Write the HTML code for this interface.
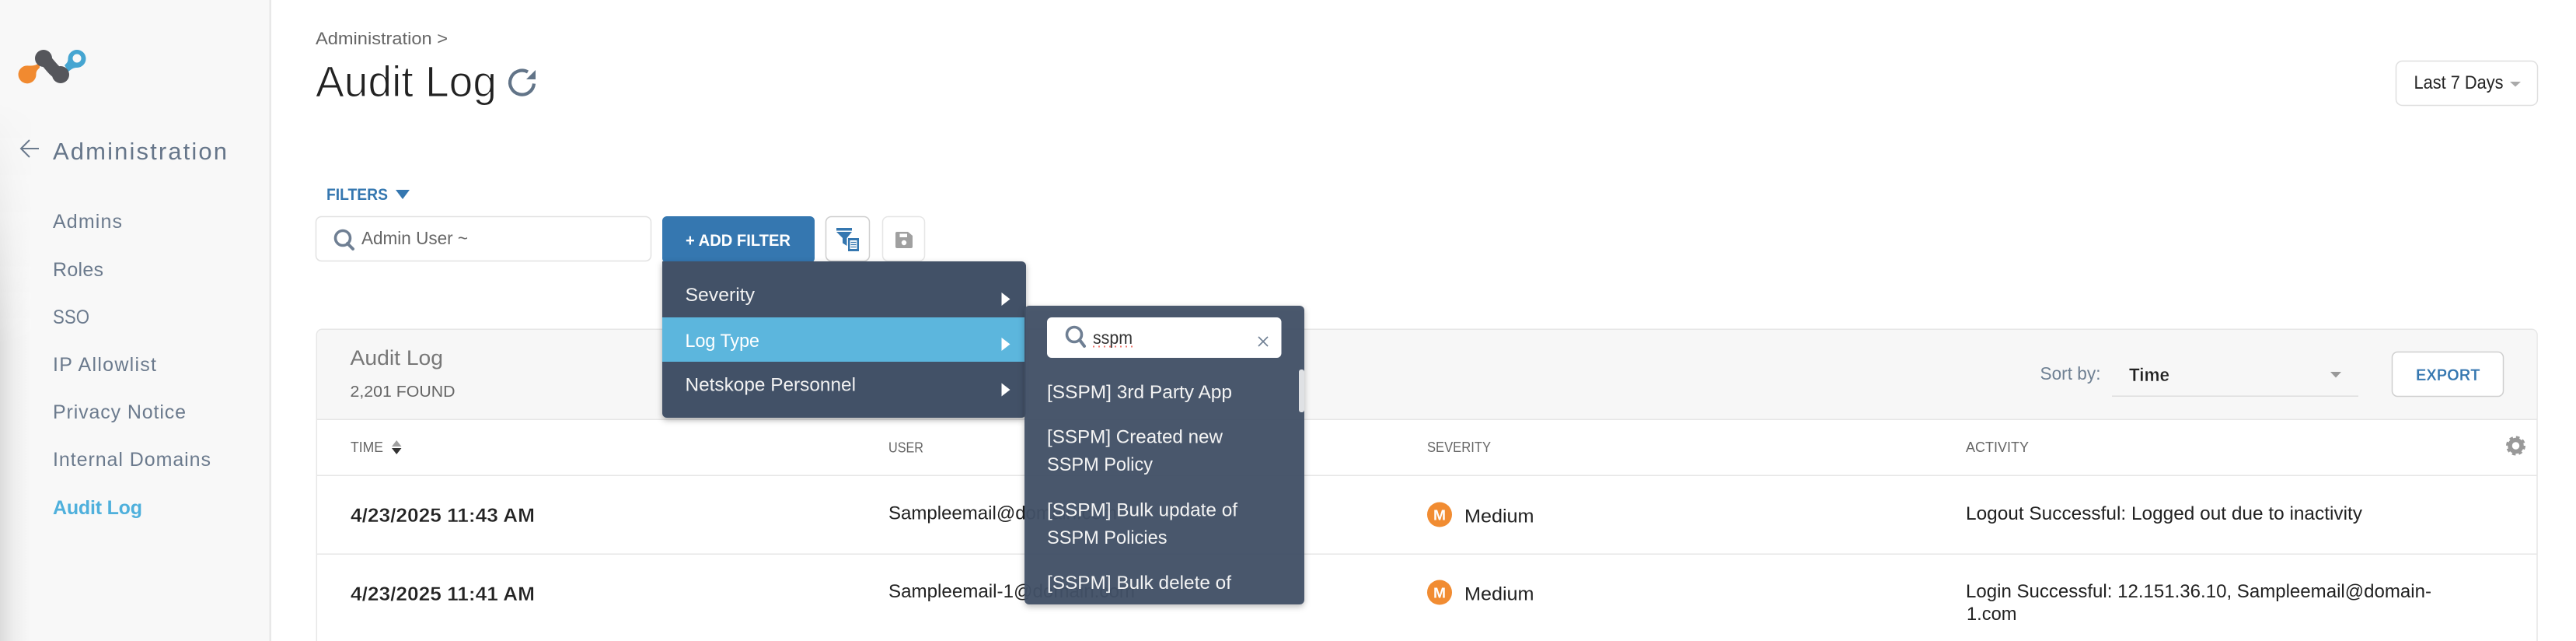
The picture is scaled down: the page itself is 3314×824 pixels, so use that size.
<!DOCTYPE html>
<html lang="en">
<head>
<meta charset="utf-8">
<title>Audit Log</title>
<style>
html,body{margin:0;padding:0;background:#fff;width:3314px;height:824px;overflow:hidden}
svg{display:block}
text{font-family:"Liberation Sans",sans-serif}
</style>
</head>
<body>
<svg xmlns="http://www.w3.org/2000/svg" width="3314" height="824" viewBox="0 0 3314 824">
<defs>
<linearGradient id="sh" x1="0" x2="1" y1="0" y2="0"><stop offset="0" stop-color="#dcdcdc"/><stop offset=".45" stop-color="#eeeeee"/><stop offset="1" stop-color="#f8f8f8"/></linearGradient>
<linearGradient id="shv" x1="0" x2="0" y1="0" y2="1"><stop offset="0" stop-color="#000"/><stop offset=".22" stop-color="#666"/><stop offset=".45" stop-color="#fff"/><stop offset="1" stop-color="#fff"/></linearGradient>
<mask id="shm"><rect x="0" y="130" width="40" height="694" fill="url(#shv)"/></mask>
</defs>

<!-- sidebar -->
<rect x="0" y="0" width="347" height="824" fill="#f8f8f8"/>
<rect x="0" y="130" width="40" height="694" fill="url(#sh)" mask="url(#shm)"/>
<rect x="346.500" y="0" width="2.500" height="824" fill="#e8e8e8"/>

<!-- logo -->
<path d="M51 80 C47 84 44 84.500 37 84.500 A11.500 11.500 0 1 0 46.500 96 C46.500 92 47 91 51 87 Z" fill="#f18a30"/>
<path d="M83 84 L88 92 C93 88 95 87 99 87 A11.500 11.500 0 1 0 87.500 75 C87.500 79 87 80 83 84 Z M99 69.500 A5.500 5.500 0 1 1 99 80.500 A5.500 5.500 0 1 1 99 69.500 Z" fill="#45a5d1" fill-rule="evenodd"/>
<path d="M56 75 C64 82 68 91 78 96" fill="none" stroke="#55565b" stroke-width="16"/>
<circle cx="56" cy="75" r="11" fill="#55565b"/><circle cx="78" cy="96" r="11" fill="#55565b"/>

<!-- sidebar nav -->
<path d="M50 191 H28 M38 180 L27 191 L38 202" fill="none" stroke="#6b7a8d" stroke-width="2"/>
<text x="68" y="205" font-size="31" fill="#66768a" textLength="224">Administration</text>
<text x="68" y="293" font-size="25" fill="#6b7a8d" textLength="89">Admins</text>
<text x="68" y="355" font-size="25" fill="#6b7a8d" textLength="65">Roles</text>
<text x="68" y="416" font-size="25" fill="#6b7a8d" textLength="47" lengthAdjust="spacingAndGlyphs">SSO</text>
<text x="68" y="477" font-size="25" fill="#6b7a8d" textLength="133">IP Allowlist</text>
<text x="68" y="538" font-size="25" fill="#6b7a8d" textLength="171">Privacy Notice</text>
<text x="68" y="599" font-size="25" fill="#6b7a8d" textLength="203">Internal Domains</text>
<text x="68" y="661" font-size="25" font-weight="700" fill="#4fb0dc" textLength="115">Audit Log</text>

<!-- header -->
<text x="406" y="57" font-size="22" fill="#666" textLength="170" lengthAdjust="spacingAndGlyphs">Administration &gt;</text>
<text x="406" y="124" font-size="56" fill="#222" stroke="#fff" stroke-width="1.100" textLength="233" lengthAdjust="spacingAndGlyphs">Audit Log</text>
<path d="M679 92.500 A15.500 15.500 0 1 0 687 107.500" fill="none" stroke="#627488" stroke-width="4.200"/>
<polygon points="689,90 689,102 677,102" fill="#627488"/>

<rect x="3082.500" y="78.500" width="182" height="57" rx="8" fill="#fff" stroke="#dfdfdf" stroke-width="1.500"/>
<text x="3105.500" y="114" font-size="24" fill="#252525" textLength="115" lengthAdjust="spacingAndGlyphs">Last 7 Days</text>
<polygon points="3229,105 3243,105 3236,111.500" fill="#aaa"/>

<!-- filters -->
<text x="420" y="257" font-size="21" font-weight="700" fill="#3577b0" textLength="79" lengthAdjust="spacingAndGlyphs">FILTERS</text>
<polygon points="509,244 527,244 518,256" fill="#3577b0"/>

<rect x="406.500" y="278.500" width="431" height="57" rx="7" fill="#fff" stroke="#e2e2e2" stroke-width="1.500"/>
<circle cx="441" cy="306" r="9.500" fill="none" stroke="#6f7f93" stroke-width="3.600"/>
<path d="M447 313 L454 320" stroke="#6f7f93" stroke-width="4" stroke-linecap="round"/>
<text x="465" y="314" font-size="23" fill="#666" textLength="137" lengthAdjust="spacingAndGlyphs">Admin User ~</text>

<rect x="852" y="278" width="196" height="60" rx="6" fill="#3577b0"/>
<text x="882" y="316" font-size="21" font-weight="700" fill="#fff" textLength="135" lengthAdjust="spacingAndGlyphs">+ ADD FILTER</text>

<rect x="1062.500" y="278.500" width="56" height="57" rx="7" fill="#fff" stroke="#cfcfcf" stroke-width="1.500"/>
<rect x="1076" y="293" width="20" height="3.500" fill="#3577b0"/>
<polygon points="1076,298 1096,298 1089.500,306 1089.500,316 1084,312.500 1084,306" fill="#3577b0"/>
<rect x="1091" y="306" width="14" height="17" fill="#3577b0"/>
<rect x="1093.500" y="309" width="9" height="11" fill="#fff"/>
<path d="M1094.500 311.500 H1101.500 M1094.500 314.500 H1101.500 M1094.500 317.500 H1101.500" stroke="#3577b0" stroke-width="1.300"/>

<rect x="1135.500" y="278.500" width="54" height="57" rx="7" fill="#fff" stroke="#e6e6e6" stroke-width="1.500"/>
<path d="M1154 298 H1168 L1174 303 V317 A2 2 0 0 1 1172 319 H1154 A2 2 0 0 1 1152 317 V300 A2 2 0 0 1 1154 298 Z" fill="#a0a0a0"/>
<rect x="1157.500" y="300.500" width="9.500" height="4.500" fill="#fff"/>
<circle cx="1163" cy="312" r="3.200" fill="#fff"/>

<!-- table panel -->
<path d="M407.300 824 V430 A7 7 0 0 1 414 423.300 H3257 A7 7 0 0 1 3264 430 V824" fill="#fff" stroke="#e6e6e6" stroke-width="1.500"/>
<path d="M408 539 V430 A6.500 6.500 0 0 1 414 424 H3257 A6.500 6.500 0 0 1 3263.300 430 V539 Z" fill="#f7f7f7"/>
<rect x="407" y="538.500" width="2857.500" height="1.500" fill="#e6e6e6"/>
<rect x="407" y="610.500" width="2857.500" height="1.500" fill="#e6e6e6"/>
<rect x="407" y="711.500" width="2857.500" height="1.500" fill="#e6e6e6"/>

<text x="450.500" y="469" font-size="27" fill="#777" textLength="119.500" lengthAdjust="spacingAndGlyphs">Audit Log</text>
<text x="450.500" y="510" font-size="20.500" fill="#666" textLength="135" lengthAdjust="spacingAndGlyphs">2,201 FOUND</text>

<text x="2624.500" y="488" font-size="23" fill="#6f8093" textLength="78" lengthAdjust="spacingAndGlyphs">Sort by:</text>
<text x="2739" y="490" font-size="24" font-weight="700" fill="#222" stroke="#f7f7f7" stroke-width=".4" textLength="52" lengthAdjust="spacingAndGlyphs">Time</text>
<polygon points="2998,478 3012,478 3005,485.500" fill="#999"/>
<rect x="2717" y="508.500" width="317" height="1.500" fill="#dedede"/>
<rect x="3077.500" y="452.500" width="143" height="57" rx="7" fill="#fff" stroke="#cfcfcf" stroke-width="1.500"/>
<text x="3108" y="489" font-size="21.500" font-weight="700" fill="#3577b0" stroke="#fff" stroke-width=".3" textLength="82.500" lengthAdjust="spacingAndGlyphs">EXPORT</text>

<!-- column headers -->
<text x="451" y="581" font-size="18.500" fill="#666" textLength="42" lengthAdjust="spacingAndGlyphs">TIME</text>
<polygon points="504,574 516.500,574 510.200,566" fill="#a0a0a0"/>
<polygon points="504,576 516.500,576 510.200,584" fill="#333"/>
<text x="1143" y="581.500" font-size="18.500" fill="#666" textLength="45" lengthAdjust="spacingAndGlyphs">USER</text>
<text x="1836" y="581" font-size="18.500" fill="#666" textLength="82" lengthAdjust="spacingAndGlyphs">SEVERITY</text>
<text x="2529" y="581" font-size="18.500" fill="#666" textLength="81" lengthAdjust="spacingAndGlyphs">ACTIVITY</text>
<circle cx="3236.500" cy="573" r="7.500" fill="none" stroke="#999" stroke-width="5.500"/>
<circle cx="3236.500" cy="573" r="11" fill="none" stroke="#999" stroke-width="3" stroke-dasharray="4.600 4.040"/>

<!-- rows -->
<text x="451" y="671" font-size="25" font-weight="700" fill="#222" stroke="#fff" stroke-width=".4" textLength="237" lengthAdjust="spacingAndGlyphs">4/23/2025 11:43 AM</text>
<text x="1143" y="667.500" font-size="24" fill="#222" textLength="294" lengthAdjust="spacingAndGlyphs">Sampleemail@domain.com</text>
<circle cx="1852" cy="661.500" r="16" fill="#f18c32"/>
<text x="1844" y="668.500" font-size="18" font-weight="700" fill="#fff" textLength="16" lengthAdjust="spacingAndGlyphs">M</text>
<text x="1884" y="671.500" font-size="24" fill="#222" textLength="89.500" lengthAdjust="spacingAndGlyphs">Medium</text>
<text x="2529" y="668" font-size="24" fill="#222" textLength="510" lengthAdjust="spacingAndGlyphs">Logout Successful: Logged out due to inactivity</text>

<text x="451" y="772" font-size="25" font-weight="700" fill="#222" stroke="#fff" stroke-width=".4" textLength="237" lengthAdjust="spacingAndGlyphs">4/23/2025 11:41 AM</text>
<text x="1143" y="768" font-size="24" fill="#222" textLength="317" lengthAdjust="spacingAndGlyphs">Sampleemail-1@domain.com</text>
<circle cx="1852" cy="761.500" r="16" fill="#f18c32"/>
<text x="1844" y="768.500" font-size="18" font-weight="700" fill="#fff" textLength="16" lengthAdjust="spacingAndGlyphs">M</text>
<text x="1884" y="771.500" font-size="24" fill="#222" textLength="89.500" lengthAdjust="spacingAndGlyphs">Medium</text>
<text x="2529" y="768" font-size="24" fill="#222" textLength="599" lengthAdjust="spacingAndGlyphs">Login Successful: 12.151.36.10, Sampleemail@domain-</text>
<text x="2530" y="797" font-size="24" fill="#222" textLength="64.500" lengthAdjust="spacingAndGlyphs">1.com</text>

<!-- dropdown 1 -->
<path d="M852 336 H1314 A6 6 0 0 1 1320 342 V531 A6 6 0 0 1 1314 537 H858 A6 6 0 0 1 852 531 Z" fill="#425167" style="filter:drop-shadow(0 3px 4px rgba(0,0,0,.3))"/>
<rect x="852" y="408" width="466" height="57" fill="#5cb6dd"/>
<text x="881.500" y="387" font-size="24" fill="#f2f2f2" textLength="89.500" lengthAdjust="spacingAndGlyphs">Severity</text>
<text x="881.500" y="446" font-size="24" fill="#fff" textLength="95.500" lengthAdjust="spacingAndGlyphs">Log Type</text>
<text x="881.500" y="502.500" font-size="24" fill="#f2f2f2" textLength="219.500" lengthAdjust="spacingAndGlyphs">Netskope Personnel</text>
<polygon points="1288.500,376 1299.500,384.500 1288.500,393" fill="#fff"/>
<polygon points="1288.500,434 1299.500,442.500 1288.500,451" fill="#fff"/>
<polygon points="1288.500,492.500 1299.500,501 1288.500,509.500" fill="#fff"/>

<!-- dropdown 2 -->
<rect x="1318" y="393" width="360" height="384" rx="6" fill="#425167" fill-opacity=".95" style="filter:drop-shadow(0 3px 4px rgba(0,0,0,.28))"/>
<rect x="1347" y="408" width="301.500" height="52" rx="6" fill="#fff"/>
<circle cx="1382" cy="430" r="9.500" fill="none" stroke="#6f7f93" stroke-width="3.600"/>
<path d="M1389 437 L1395 445" stroke="#6f7f93" stroke-width="4" stroke-linecap="round"/>
<text x="1406" y="442" font-size="23" fill="#333" textLength="51" lengthAdjust="spacingAndGlyphs">sspm</text>
<line x1="1406" y1="445.500" x2="1457" y2="445.500" stroke="#f07a70" stroke-width="2" stroke-dasharray="2 5"/>
<path d="M1619 433 L1631 445 M1631 433 L1619 445" stroke="#6f7f93" stroke-width="1.600"/>
<rect x="1671" y="475" width="7" height="55" rx="3" fill="#dfe1e4"/>
<text x="1347" y="512" font-size="24" fill="#f4f4f4" textLength="238" lengthAdjust="spacingAndGlyphs">[SSPM] 3rd Party App</text>
<text x="1347" y="569.500" font-size="24" fill="#f4f4f4" textLength="226" lengthAdjust="spacingAndGlyphs">[SSPM] Created new</text>
<text x="1347" y="605" font-size="24" fill="#f4f4f4" textLength="136" lengthAdjust="spacingAndGlyphs">SSPM Policy</text>
<text x="1347" y="663.500" font-size="24" fill="#f4f4f4" textLength="245" lengthAdjust="spacingAndGlyphs">[SSPM] Bulk update of</text>
<text x="1347" y="699" font-size="24" fill="#f4f4f4" textLength="154.500" lengthAdjust="spacingAndGlyphs">SSPM Policies</text>
<text x="1347" y="757" font-size="24" fill="#f4f4f4" textLength="237" lengthAdjust="spacingAndGlyphs">[SSPM] Bulk delete of</text>
</svg>
</body>
</html>
